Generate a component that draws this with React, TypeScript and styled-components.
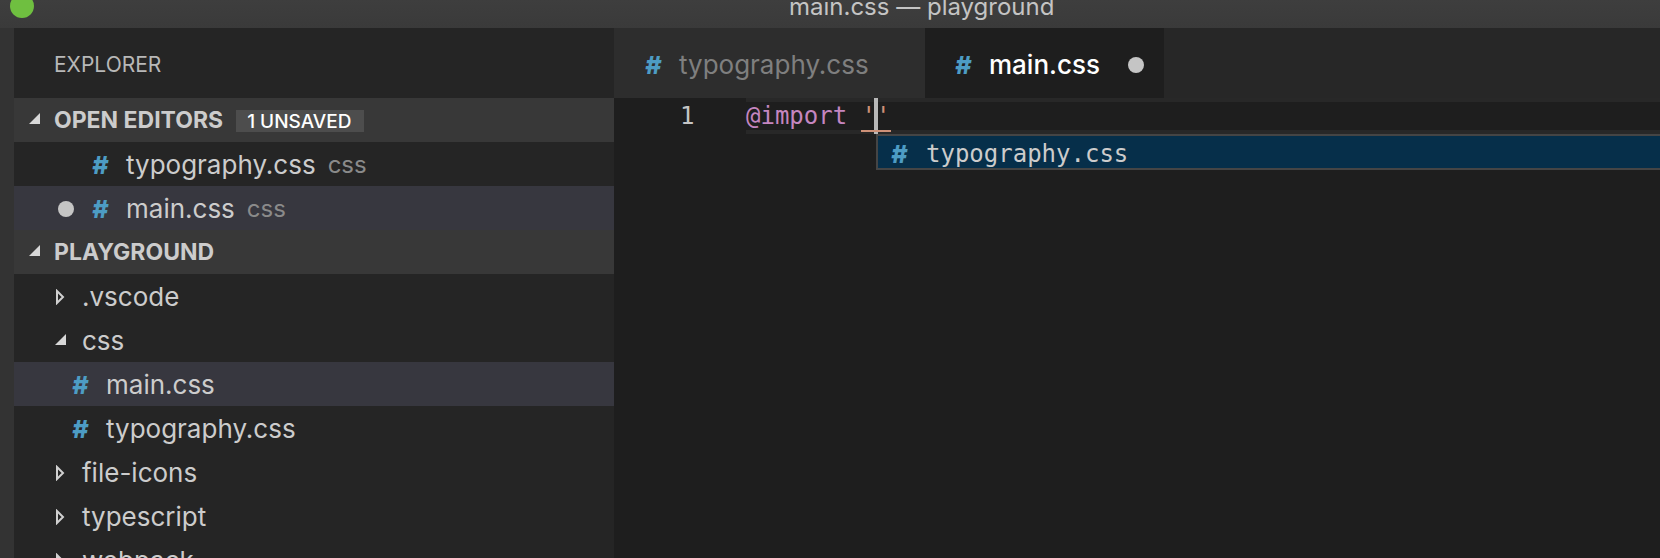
import { createGlobalStyle } from 'styled-components';
import styled from 'styled-components';

const GlobalStyle = createGlobalStyle`
  html, body {
    margin: 0;
    height: 558px;
    overflow: hidden;
    background: #1e1e1e;
  }
  * {
    box-sizing: border-box;
  }
`;

const uiFont = `Inter, Roboto, 'Liberation Sans', sans-serif`;
const codeFont = `'DejaVu Sans Mono', monospace`;

const Window = styled.div`
  width: 1660px;
  height: 558px;
  overflow: hidden;
  display: flex;
  flex-direction: column;
  font-family: ${uiFont};
`;

const TitleBar = styled.header`
  flex: 0 0 28px;
  display: flex;
  overflow: hidden;
  background: linear-gradient(#3e3e3e, #3a3a3a);
`;

const GreenLight = styled.span`
  width: 24px;
  height: 24px;
  margin: -6px 0 0 10px;
  border-radius: 50%;
  background: #6fbf40;
`;

const WindowTitle = styled.span`
  margin: -9px 0 0 755px;
  font-size: 24px;
  line-height: 32px;
  color: #c4c4c4;
`;

const Body = styled.div`
  flex: 1;
  min-height: 0;
  display: flex;
`;

const ActivityStrip = styled.div`
  flex: 0 0 14px;
  background: #333333;
`;

const Sidebar = styled.aside`
  flex: 0 0 600px;
  overflow: hidden;
  background: #252525;
`;

const SidebarTitle = styled.div`
  height: 70px;
  padding: 2px 0 0 40px;
  display: flex;
  align-items: center;
  font-size: 21px;
  color: #b8b8b8;
`;

const SectionHeader = styled.div`
  height: 44px;
  padding-left: 15px;
  display: flex;
  align-items: center;
  background: #383838;
  font-size: 23px;
  font-weight: 700;
  color: #cccccc;
`;

const Row = styled.div<{ $selected?: boolean; $indent: number }>`
  height: 44px;
  padding: 1px 0 0 ${({ $indent }) => $indent}px;
  display: flex;
  align-items: center;
  background: ${({ $selected }) => ($selected ? '#37373f' : 'transparent')};
  font-size: 26px;
  color: #cccccc;
`;

const Hash = styled.span`
  width: 34px;
  flex: none;
  font-size: 25px;
  font-weight: 800;
  font-style: italic;
  color: #4d9cc4;
`;

const Hint = styled.span`
  margin-left: 12px;
  font-size: 24px;
  color: #8a8a8a;
`;

const Badge = styled.span`
  height: 22px;
  margin: 2px 0 0 13px;
  padding: 0 13px 0 11px;
  display: flex;
  align-items: center;
  background: #4d4d4d;
  font-size: 19px;
  font-weight: 500;
  color: #ffffff;
`;

const DirtyDot = styled.span<{ $gap: number }>`
  width: 16px;
  height: 16px;
  flex: none;
  margin-right: ${({ $gap }) => $gap}px;
  border-radius: 50%;
  background: #c5c5c5;
`;

const Twisty = styled.svg`
  flex: none;
  width: 12px;
  height: 16px;
`;

const TwistySlot = styled.span<{ $width: number }>`
  width: ${({ $width }) => $width}px;
  flex: none;
  display: flex;
  align-items: center;
`;

const Editor = styled.main`
  flex: 1;
  min-width: 0;
  display: flex;
  flex-direction: column;
  background: #1e1e1e;
`;

const TabBar = styled.div`
  flex: 0 0 70px;
  display: flex;
  background: #272727;
`;

const Tab = styled.div<{ $active?: boolean; $width: number }>`
  width: ${({ $width }) => $width}px;
  padding: 3px 0 0 ${({ $active }) => ($active ? 30 : 31)}px;
  display: flex;
  align-items: center;
  background: ${({ $active }) => ($active ? '#1e1e1e' : '#2d2d2d')};
  font-size: 26px;
  font-weight: ${({ $active }) => ($active ? 500 : 400)};
  color: ${({ $active }) => ($active ? '#ffffff' : '#7f7f7f')};
`;

const TabDot = styled(DirtyDot)`
  margin-left: 28px;
`;

const Code = styled.div`
  position: relative;
  flex: 1;
  display: flex;
  align-items: flex-start;
  font-family: ${codeFont};
  font-size: 24px;
`;

const Gutter = styled.div`
  flex: 0 0 132px;
  height: 36px;
  padding: 4px 0 0 66px;
  line-height: 28px;
  color: #c6c6c6;
`;

const CurrentLine = styled.div`
  flex: 1;
  height: 36px;
  line-height: 28px;
  white-space: pre;
  border-top: 4px solid #282828;
  border-bottom: 4px solid #282828;
`;

const AtRule = styled.span`
  color: #c586c0;
`;

const Quote = styled.span`
  color: #ce9178;
`;

const Caret = styled.span`
  position: absolute;
  left: 260px;
  top: 0;
  width: 4px;
  height: 36px;
  background: #b8b8b8;
`;

const BracketMark = styled.span`
  position: absolute;
  left: 247px;
  top: 32px;
  width: 30px;
  height: 2px;
  background: #ce9178;
`;

const SuggestWidget = styled.div`
  position: absolute;
  left: 262px;
  top: 36px;
  right: 0;
  height: 36px;
  padding: 3px 0 0 13px;
  display: flex;
  align-items: center;
  background: #062f4a;
  border: 2px solid #454545;
  border-right: 0;
  color: #cccccc;
`;

const SuggestHash = styled(Hash)`
  width: 35px;
  font-family: ${uiFont};
`;

const Arrow = ({ open }: { open?: boolean }) => (
  <Twisty viewBox="0 0 12 16">
    {open ? (
      <polygon points="0,12 11,12 11,1" fill="#d8d8d8" />
    ) : (
      <polygon points="2,2 8,8 2,14" fill="none" stroke="#d0d0d0" strokeWidth="2" />
    )}
  </Twisty>
);

export default function App() {
  return (
    <>
      <GlobalStyle />
      <Window>
        <TitleBar>
          <GreenLight />
          <WindowTitle>main.css — playground</WindowTitle>
        </TitleBar>
        <Body>
          <ActivityStrip />
          <Sidebar>
            <SidebarTitle>EXPLORER</SidebarTitle>
            <SectionHeader>
              <TwistySlot $width={25}>
                <Arrow open />
              </TwistySlot>
              OPEN EDITORS
              <Badge>1 UNSAVED</Badge>
            </SectionHeader>
            <Row $indent={78}>
              <Hash>#</Hash>
              typography.css
              <Hint>css</Hint>
            </Row>
            <Row $selected $indent={44}>
              <DirtyDot $gap={18} />
              <Hash>#</Hash>
              main.css
              <Hint>css</Hint>
            </Row>
            <SectionHeader>
              <TwistySlot $width={25}>
                <Arrow open />
              </TwistySlot>
              PLAYGROUND
            </SectionHeader>
            <Row $indent={41}>
              <TwistySlot $width={27}>
                <Arrow />
              </TwistySlot>
              .vscode
            </Row>
            <Row $indent={41}>
              <TwistySlot $width={27}>
                <Arrow open />
              </TwistySlot>
              css
            </Row>
            <Row $selected $indent={58}>
              <Hash>#</Hash>
              main.css
            </Row>
            <Row $indent={58}>
              <Hash>#</Hash>
              typography.css
            </Row>
            <Row $indent={41}>
              <TwistySlot $width={27}>
                <Arrow />
              </TwistySlot>
              file-icons
            </Row>
            <Row $indent={41}>
              <TwistySlot $width={27}>
                <Arrow />
              </TwistySlot>
              typescript
            </Row>
            <Row $indent={41}>
              <TwistySlot $width={27}>
                <Arrow />
              </TwistySlot>
              webpack
            </Row>
          </Sidebar>
          <Editor>
            <TabBar>
              <Tab $width={311}>
                <Hash>#</Hash>
                typography.css
              </Tab>
              <Tab $active $width={239}>
                <Hash>#</Hash>
                main.css
                <TabDot $gap={0} />
              </Tab>
            </TabBar>
            <Code>
              <Gutter>1</Gutter>
              <CurrentLine>
                <AtRule>@import</AtRule> <Quote>''</Quote>
              </CurrentLine>
              <Caret />
              <BracketMark />
              <SuggestWidget>
                <SuggestHash>#</SuggestHash>
                typography.css
              </SuggestWidget>
            </Code>
          </Editor>
        </Body>
      </Window>
    </>
  );
}
